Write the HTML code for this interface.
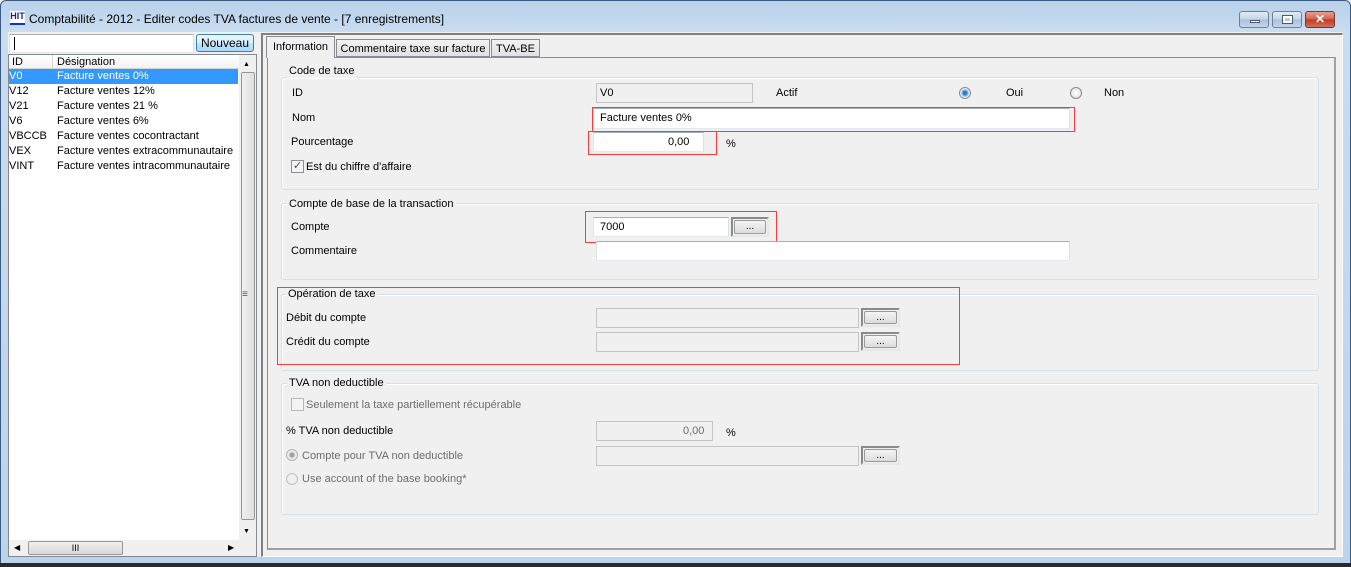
<!DOCTYPE html>
<html><head><meta charset="utf-8"><style>
*{box-sizing:border-box;margin:0;padding:0}
body{width:1351px;height:567px;position:relative;overflow:hidden;background:#f0f0f0;font-family:"Liberation Sans",sans-serif;font-size:11px;color:#000}
.a{position:absolute}
.t{position:absolute;white-space:nowrap;line-height:13px}
.inp{position:absolute;background:#fff;border:1px solid #ababab;border-color:#abadb3 #dbdfe6 #e3e9ef #e2e3ea}
.dis{background:#f0f0f0;border:1px solid #c4c4c4}
.grp{position:absolute;border:1px solid #d5dfe5;border-radius:3px;box-shadow:inset 1px 1px 0 #fff}
.leg{position:absolute;background:#f0f0f0;padding:0 2px;line-height:13px;white-space:nowrap}
.red{position:absolute;border:1px solid #ff3a3a}
.btnw{position:absolute;border:2px solid #8a8a8a;border-right-color:#e8e8e8;border-bottom-color:#e8e8e8;background:#f0f0f0}
.btnw div{position:absolute;left:1px;top:1px;right:1px;bottom:1px;border:1px solid #9a9a9a;border-radius:2px;background:linear-gradient(#f4f4f4,#dcdcdc);text-align:center;font-size:10px;line-height:12px}
.rad{position:absolute;width:12px;height:12px;border-radius:50%;border:1px solid #8a8a8a;background:radial-gradient(#fff,#ddd)}
.chk{position:absolute;width:13px;height:13px;border:1px solid #8e8f8f;background:#f4f4f4}
.row{position:absolute;left:9px;width:229px;height:15px;line-height:15px}
.row span{position:absolute;left:48px}
</style></head><body>
<div class="a" style="left:0;top:0;width:1351px;height:567px;background:linear-gradient(#b9d1ea,#c9dcf0 30px,#bcd3ec);border:1px solid #3a5a80;border-radius:6px 6px 0 0"></div>
<div class="a" style="left:0;top:563px;width:1351px;height:4px;background:#2a2a2a"></div>
<div class="a" style="left:10px;top:11px;width:15px;height:14px;background:#fff;border-bottom:2px solid #1030d0;font-size:9px;font-weight:bold;color:#1020a0;line-height:11px;text-align:center">HIT</div>
<div class="t" style="left:29px;top:13px;font-size:12px">Comptabilité - 2012 - Editer codes TVA factures de vente - [7 enregistrements]</div>
<div class="a" style="left:1239px;top:11px;width:30px;height:17px;border:1px solid #6d7f99;border-radius:3px;background:linear-gradient(#e2ebf5,#c2d3e8 50%,#a9bfdb 51%,#c5d6ea)"><div class="a" style="left:10px;top:8px;width:10px;height:3px;background:#fff;border:1px solid #4a5a70"></div></div>
<div class="a" style="left:1272px;top:11px;width:30px;height:17px;border:1px solid #6d7f99;border-radius:3px;background:linear-gradient(#e2ebf5,#c2d3e8 50%,#a9bfdb 51%,#c5d6ea)"><div class="a" style="left:10px;top:4px;width:9px;height:7px;border:2px solid #fff;outline:1px solid #4a5a70"></div></div>
<div class="a" style="left:1305px;top:11px;width:30px;height:17px;border:1px solid #7a3530;border-radius:3px;background:linear-gradient(#e8a090,#d0604c 50%,#c03a22 51%,#d4705a);color:#fff;font-weight:bold;font-size:12px;text-align:center;line-height:15px">✕</div>
<div class="a" style="left:8px;top:32px;width:1335px;height:525px;background:#f0f0f0"></div>
<div class="inp" style="left:9px;top:34px;width:185px;height:19px"></div>
<div class="a" style="left:14px;top:37px;width:1px;height:13px;background:#000"></div>
<div class="a" style="left:196px;top:34px;width:58px;height:18px;border:1px solid #3c7fb1;border-radius:3px;background:linear-gradient(#eaf6fd,#d9f0fc 50%,#bee6fd 51%,#a7d9f5);text-align:center;line-height:16px;font-size:12px">Nouveau</div>
<div class="a" style="left:8px;top:54px;width:249px;height:503px;background:#fff;border:1px solid #828790"></div>
<div class="a" style="left:9px;top:55px;width:230px;height:14px;background:linear-gradient(#fff,#f3f3f3);border-bottom:1px solid #d5d5d5"></div>
<div class="a" style="left:52px;top:55px;width:1px;height:14px;background:#d5d5d5"></div>
<div class="t" style="left:12px;top:56px">ID</div><div class="t" style="left:57px;top:56px">Désignation</div>
<div class="row" style="top:69px;background:#3399ff;color:#fff">V0<span>Facture ventes 0%</span></div>
<div class="row" style="top:84px">V12<span>Facture ventes 12%</span></div>
<div class="row" style="top:99px">V21<span>Facture ventes 21 %</span></div>
<div class="row" style="top:114px">V6<span>Facture ventes 6%</span></div>
<div class="row" style="top:129px">VBCCB<span>Facture ventes cocontractant</span></div>
<div class="row" style="top:144px">VEX<span>Facture ventes extracommunautaire</span></div>
<div class="row" style="top:159px">VINT<span>Facture ventes intracommunautaire</span></div>
<div class="a" style="left:239px;top:55px;width:17px;height:485px;background:#f0f0f0"></div>
<div class="a" style="left:241px;top:72px;width:14px;height:448px;border:1px solid #979797;border-radius:2px;background:linear-gradient(90deg,#f0f0f0,#dedede)"></div>
<div class="t" style="left:243px;top:58px;font-size:7px">▲</div>
<div class="t" style="left:243px;top:525px;font-size:7px">▼</div>
<div class="a" style="left:9px;top:540px;width:230px;height:16px;background:#f0f0f0"></div>
<div class="a" style="left:28px;top:541px;width:95px;height:14px;border:1px solid #979797;border-radius:2px;background:linear-gradient(#f0f0f0,#d8d8d8);text-align:center;font-size:9px;line-height:12px">III</div>
<div class="t" style="left:14px;top:541px;font-size:8px">◀</div><div class="t" style="left:228px;top:541px;font-size:8px">▶</div>
<div class="a" style="left:239px;top:540px;width:17px;height:16px;background:#f0f0f0"></div>
<div class="t" style="left:242px;top:288px;font-size:10px;color:#555">≡</div>
<div class="a" style="left:261px;top:33px;width:1082px;height:524px;border:1px solid #a0a0a0;border-right-color:#fff;border-bottom-color:#fff;border-left:2px solid #808080;border-top:2px solid #808080"></div>
<div class="a" style="left:267px;top:57px;width:1069px;height:493px;border:1px solid #898c95;background:#f0f0f0;border-right:2px solid #a0a0a0;border-bottom:2px solid #a0a0a0"></div>
<div class="a" style="left:266px;top:36px;width:69px;height:22px;background:#f0f0f0;border:1px solid #898c95;border-bottom:none;text-align:center;line-height:20px">Information</div>
<div class="a" style="left:336px;top:39px;width:154px;height:18px;background:linear-gradient(#f3f3f3,#e1e1e1);border:1px solid #898c95;text-align:center;line-height:18px">Commentaire taxe sur facture</div>
<div class="a" style="left:491px;top:39px;width:49px;height:18px;background:linear-gradient(#f3f3f3,#e1e1e1);border:1px solid #898c95;text-align:center;line-height:18px">TVA-BE</div>
<div class="grp" style="left:281px;top:77px;width:1038px;height:113px"></div>
<div class="leg" style="left:287px;top:65px">Code de taxe</div>
<div class="t" style="left:292px;top:87px">ID</div>
<div class="inp dis" style="left:596px;top:83px;width:157px;height:20px"></div>
<div class="t" style="left:600px;top:87px">V0</div>
<div class="t" style="left:776px;top:87px">Actif</div>
<div class="rad" style="left:959px;top:87px;background:radial-gradient(#2a80c8 2px,#8fc0e8 3px,#fff 5px)"></div>
<div class="t" style="left:1006px;top:87px">Oui</div>
<div class="rad" style="left:1070px;top:87px"></div>
<div class="t" style="left:1104px;top:87px">Non</div>
<div class="t" style="left:292px;top:112px">Nom</div>
<div class="inp" style="left:593px;top:108px;width:477px;height:21px"></div>
<div class="red" style="left:592px;top:107px;width:483px;height:25px"></div>
<div class="t" style="left:600px;top:112px">Facture ventes 0%</div>
<div class="t" style="left:291px;top:136px">Pourcentage</div>
<div class="inp" style="left:593px;top:132px;width:111px;height:20px"></div>
<div class="red" style="left:588px;top:131px;width:129px;height:24px"></div>
<div class="t" style="left:668px;top:136px">0,00</div>
<div class="t" style="left:726px;top:138px">%</div>
<div class="chk" style="left:291px;top:160px;font-size:11px;line-height:11px;text-align:center;color:#4a4a70">✓</div>
<div class="t" style="left:306px;top:161px">Est du chiffre d'affaire</div>
<div class="grp" style="left:281px;top:203px;width:1038px;height:77px"></div>
<div class="leg" style="left:287px;top:198px">Compte de base de la transaction</div>
<div class="t" style="left:291px;top:221px">Compte</div>
<div class="inp" style="left:593px;top:217px;width:136px;height:20px"></div>
<div class="t" style="left:600px;top:221px">7000</div>
<div class="btnw" style="left:731px;top:217px;width:38px;height:20px"><div>...</div></div>
<div class="red" style="left:585px;top:211px;width:192px;height:32px"></div>
<div class="t" style="left:291px;top:245px">Commentaire</div>
<div class="inp" style="left:596px;top:241px;width:474px;height:20px"></div>
<div class="grp" style="left:281px;top:294px;width:1038px;height:77px"></div>
<div class="leg" style="left:286px;top:288px">Opération de taxe</div>
<div class="red" style="left:277px;top:287px;width:683px;height:78px"></div>
<div class="t" style="left:286px;top:312px">Débit du compte</div>
<div class="inp dis" style="left:596px;top:308px;width:263px;height:20px"></div>
<div class="btnw" style="left:861px;top:308px;width:39px;height:19px"><div>...</div></div>
<div class="t" style="left:286px;top:336px">Crédit du compte</div>
<div class="inp dis" style="left:596px;top:332px;width:263px;height:20px"></div>
<div class="btnw" style="left:861px;top:332px;width:39px;height:19px"><div>...</div></div>
<div class="grp" style="left:281px;top:383px;width:1038px;height:132px"></div>
<div class="leg" style="left:287px;top:377px">TVA non deductible</div>
<div class="chk" style="left:291px;top:398px;border-color:#b8b8b8"></div>
<div class="t" style="left:306px;top:399px;color:#6d6d6d">Seulement la taxe partiellement récupérable</div>
<div class="t" style="left:286px;top:425px">% TVA non deductible</div>
<div class="inp dis" style="left:596px;top:421px;width:117px;height:20px"></div>
<div class="t" style="left:683px;top:425px;color:#6d6d6d">0,00</div>
<div class="t" style="left:726px;top:427px">%</div>
<div class="rad" style="left:286px;top:449px;border-color:#b0b0b0;background:radial-gradient(#a0a0a0 2px,#e0e0e0 3px,#f4f4f4 5px)"></div>
<div class="t" style="left:302px;top:450px;color:#6d6d6d">Compte pour TVA non deductible</div>
<div class="inp dis" style="left:596px;top:446px;width:263px;height:20px"></div>
<div class="btnw" style="left:861px;top:446px;width:39px;height:19px"><div>...</div></div>
<div class="rad" style="left:286px;top:473px;border-color:#c0c0c0;background:#f0f0f0"></div>
<div class="t" style="left:302px;top:473px;color:#6d6d6d">Use account of the base booking*</div>
</body></html>
